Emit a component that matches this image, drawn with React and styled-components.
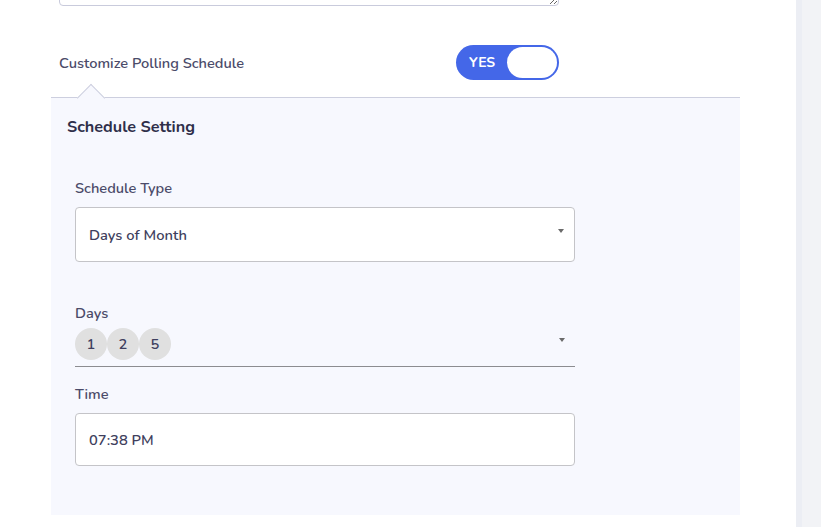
import React from "react";
import styled, { createGlobalStyle } from "styled-components";

const Global = createGlobalStyle`
  html, body { margin: 0; padding: 0; background: #ffffff; }
  body { font-family: "Nunito", Lato, "Noto Sans", sans-serif; overflow: hidden; }
  * { box-sizing: border-box; }
`;

const Page = styled.div`
  display: flex;
  width: 821px;
  height: 527px;
  overflow: hidden;
`;

const Main = styled.div`
  width: 796px;
  display: flex;
  flex-direction: column;
`;

const Sidebar = styled.div`
  flex: 1;
  background: #f2f3f6;
  border-left: 6px solid #eceef4;
`;

const TextArea = styled.textarea`
  display: block;
  margin: -54px 0 0 59px;
  width: 500px;
  height: 60px;
  border: 1px solid #c9cbdc;
  border-radius: 4px;
  background: #fff;
  resize: vertical;
  font: inherit;
`;

const SwitchRow = styled.div`
  display: flex;
  align-items: center;
  justify-content: space-between;
  margin: 39px 0 0 59px;
  width: 500px;
`;

const RowLabel = styled.span`
  font-size: 14.6px;
  font-weight: 600;
  color: #4b4b69;
`;

const Toggle = styled.div`
  width: 103px;
  height: 35px;
  border-radius: 18px;
  background: #4467e8;
  display: flex;
  align-items: center;
  justify-content: space-between;
  padding: 0 2px 0 13px;
`;

const ToggleText = styled.span`
  color: #ffffff;
  font-size: 14px;
  font-weight: 700;
`;

const Knob = styled.span`
  width: 50px;
  height: 31px;
  border-radius: 16px;
  background: #ffffff;
`;

const Panel = styled.div`
  position: relative;
  margin: 17px 0 0 51px;
  width: 689px;
  height: 418px;
  background: #f7f8fe;
  border-top: 1px solid #cdcfdf;
  padding: 19px 0 0 16px;

  &::before {
    content: "";
    position: absolute;
    left: 30px;
    top: -10px;
    width: 19px;
    height: 19px;
    background: #f7f8fe;
    border-top: 1px solid #cdcfdf;
    border-left: 1px solid #cdcfdf;
    transform: rotate(45deg);
  }
`;

const PanelTitle = styled.div`
  font-size: 16.2px;
  line-height: 20px;
  font-weight: 700;
  color: #2f2f4a;
`;

const Form = styled.div`
  padding-left: 8px;
  width: 508px;
  display: flex;
  flex-direction: column;
`;

const Label = styled.label`
  display: block;
  font-size: 14.6px;
  line-height: 20px;
  font-weight: 600;
  color: #4b4b69;
  margin-top: ${(p) => p.$gap}px;
`;

const Box = styled.div`
  margin-top: 9px;
  height: ${(p) => p.$h}px;
  background: #ffffff;
  border: 1px solid #c4c4c8;
  border-radius: 4px;
  display: flex;
  align-items: center;
  justify-content: space-between;
  padding: 1px 10px 0 13px;
  font-size: 14.7px;
  font-weight: 600;
  color: #3f3f5e;
`;

const Caret = styled.span`
  width: 0;
  height: 0;
  border-left: 3.5px solid transparent;
  border-right: 3.5px solid transparent;
  border-top: 4px solid #6a6a6a;
  margin-bottom: ${(p) => p.$lift || 0}px;
`;

const ChipRow = styled.div`
  margin-top: 5px;
  display: flex;
  align-items: center;
  justify-content: space-between;
  padding: 0 10px 6px 0;
  border-bottom: 1px solid #8c8c90;
`;

const Chips = styled.div`
  display: flex;
`;

const Chip = styled.span`
  width: 32px;
  height: 32px;
  border-radius: 50%;
  background: #e0e0e0;
  display: flex;
  align-items: center;
  justify-content: center;
  font-size: 14.7px;
  font-weight: 600;
  color: #3f3f5e;
`;

export default function App() {
  return (
    <Page>
      <Global />
      <Main>
        <TextArea readOnly />
        <SwitchRow>
          <RowLabel>Customize Polling Schedule</RowLabel>
          <Toggle>
            <ToggleText>YES</ToggleText>
            <Knob />
          </Toggle>
        </SwitchRow>
        <Panel>
          <PanelTitle>Schedule Setting</PanelTitle>
          <Form>
            <Label $gap={41}>Schedule Type</Label>
            <Box $h={55}>
              <span>Days of Month</span>
              <Caret $lift={8} />
            </Box>
            <Label $gap={41}>Days</Label>
            <ChipRow>
              <Chips>
                {["1", "2", "5"].map((d) => (
                  <Chip key={d}>{d}</Chip>
                ))}
              </Chips>
              <Caret $lift={8} />
            </ChipRow>
            <Label $gap={17}>Time</Label>
            <Box $h={53}>
              <span>07:38 PM</span>
            </Box>
          </Form>
        </Panel>
      </Main>
      <Sidebar />
    </Page>
  );
}
